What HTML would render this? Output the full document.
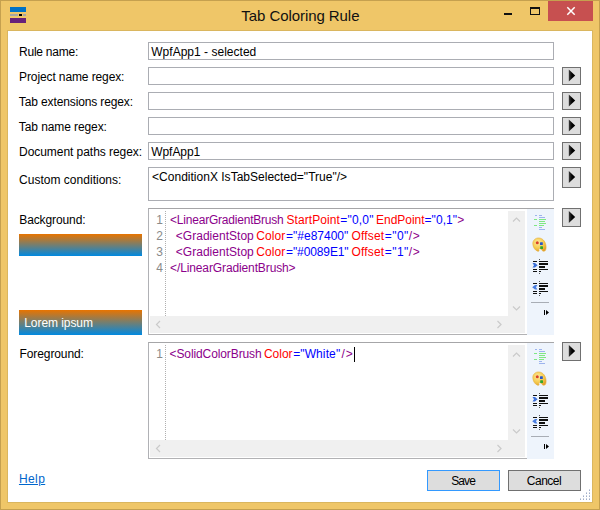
<!DOCTYPE html>
<html><head><meta charset="utf-8">
<title>Tab Coloring Rule</title>
<style>
*{box-sizing:border-box;margin:0;padding:0}
html,body{width:600px;height:510px;overflow:hidden;background:#efc668;font-family:"Liberation Sans",sans-serif;font-size:12px;color:#000}
div,span{position:absolute}
span.t{position:static}
#frame{left:0;top:0;width:600px;height:510px;border:1px solid #c5a04f;background:#efc668}
#content{left:8px;top:31px;width:584px;height:471px;background:#fff;box-shadow:0 0 0 1px #dab65f}
#title{left:0;top:6px;width:600px;text-align:center;font-size:15px;line-height:20px;color:#111}
#close{left:548px;top:1px;width:45px;height:20px;background:#c75050}
.lbl{left:19px;font-size:12px;line-height:16px;white-space:nowrap}
.inp{left:148px;width:406px;height:18px;border:1px solid #abadb3;background:#fff;font-size:12px;line-height:16px;padding-left:2px;padding-top:1px;white-space:nowrap;overflow:hidden}
.btn{left:562px;width:19px;height:18px;border:1px solid #707070;background:#dddddd}
.grad{left:19px;width:123px;background:linear-gradient(#e87400,#0089e1)}
.ed{left:148px;width:406px}
.edbox{left:0;top:0;width:406px;border-top:1px solid #a6a6a8;border-left:1px solid #b0b1b5}
.edbox:after{content:"";position:absolute;left:0;bottom:0;width:379px;height:1px;background:#b2b2b4}
.ed .vs{left:360px;top:3px;width:17px;background:#f0f0f0}
.ed .hs{left:2px;height:17px;width:375px;background:#f0f0f0}
.ed .tb{left:379px;top:1px;width:27px;background:#eef4fc}
.ed .gut{left:17px;top:3px;width:0;border-left:1px dotted #b0b0b0}
.ln{left:1px;width:14px;text-align:right;color:#8a8a8a;line-height:16px}
.code{left:22px;line-height:16px;white-space:pre;letter-spacing:-0.1px}
.p{color:#8b008b}.r{color:#ff0000}.b{color:#0000ff}
.pb{left:0;top:0;width:73px;height:21px;border:1px solid #707070;background:#dddddd;text-align:center;line-height:19px;padding-top:1px}
</style></head><body>
<div id="frame"></div>
<div style="left:241.35px;top:6px;font-size:15px;line-height:16px;white-space:pre;letter-spacing:-0.069px;line-height:20px;color:#111">Tab Coloring Rule</div>
<div style="left:10px;top:7px;width:16px;height:5px;background:#0072c6"></div>
<div style="left:10px;top:14px;width:8px;height:2px;background:#a6a6a6"></div><div style="left:23px;top:14px;width:3px;height:2px;background:#a6a6a6"></div>
<div style="left:19px;top:14px;width:3px;height:2px;background:#000"></div>
<div style="left:10px;top:18px;width:16px;height:5px;background:#68217a"></div>
<div style="left:504px;top:13px;width:8px;height:2px;background:#111"></div>
<div style="left:530px;top:7px;width:10px;height:8px;border:1px solid #111;border-top-width:2px"></div>
<div id="close"><svg width="45" height="20" style="position:absolute;left:0;top:0"><path d="M19.3 6.3 L26.7 13.7 M26.7 6.3 L19.3 13.7" stroke="#fff" stroke-width="1.5" fill="none"/></svg></div>

<div id="content"></div>

<div style="left:19.05px;top:44px;font-size:12px;line-height:16px;white-space:pre;letter-spacing:-0.244px;">Rule name:</div>
<div class="inp" style="top:42px"></div><div style="left:151.25px;top:44px;font-size:12px;line-height:16px;white-space:pre;letter-spacing:0.018px;">WpfApp1 - selected</div>

<div style="left:19.05px;top:69px;font-size:12px;line-height:16px;white-space:pre;letter-spacing:-0.111px;">Project name regex:</div>
<div class="inp" style="top:67px"></div><div class="btn" style="top:67px;height:18px"><svg width="17" height="16" style="position:absolute;left:0;top:0"><defs><linearGradient id="ag67" x1="0" y1="0" x2="1" y2="0"><stop offset="0" stop-color="#3a3a3a"/><stop offset="0.5" stop-color="#000"/></linearGradient></defs><path d="M5.8 1.6 L12.2 7.6 L5.8 13.6 Z" fill="url(#ag67)"/></svg></div>

<div style="left:18.85px;top:94px;font-size:12px;line-height:16px;white-space:pre;letter-spacing:-0.125px;">Tab extensions regex:</div>
<div class="inp" style="top:92px"></div><div class="btn" style="top:92px;height:18px"><svg width="17" height="16" style="position:absolute;left:0;top:0"><defs><linearGradient id="ag92" x1="0" y1="0" x2="1" y2="0"><stop offset="0" stop-color="#3a3a3a"/><stop offset="0.5" stop-color="#000"/></linearGradient></defs><path d="M5.8 1.6 L12.2 7.6 L5.8 13.6 Z" fill="url(#ag92)"/></svg></div>

<div style="left:18.85px;top:119px;font-size:12px;line-height:16px;white-space:pre;letter-spacing:-0.093px;">Tab name regex:</div>
<div class="inp" style="top:117px"></div><div class="btn" style="top:117px;height:18px"><svg width="17" height="16" style="position:absolute;left:0;top:0"><defs><linearGradient id="ag117" x1="0" y1="0" x2="1" y2="0"><stop offset="0" stop-color="#3a3a3a"/><stop offset="0.5" stop-color="#000"/></linearGradient></defs><path d="M5.8 1.6 L12.2 7.6 L5.8 13.6 Z" fill="url(#ag117)"/></svg></div>

<div style="left:19.05px;top:144px;font-size:12px;line-height:16px;white-space:pre;letter-spacing:-0.050px;">Document paths regex:</div>
<div class="inp" style="top:142px"></div><div style="left:151.25px;top:144px;font-size:12px;line-height:16px;white-space:pre;letter-spacing:-0.067px;">WpfApp1</div><div class="btn" style="top:142px;height:18px"><svg width="17" height="16" style="position:absolute;left:0;top:0"><defs><linearGradient id="ag142" x1="0" y1="0" x2="1" y2="0"><stop offset="0" stop-color="#3a3a3a"/><stop offset="0.5" stop-color="#000"/></linearGradient></defs><path d="M5.8 1.6 L12.2 7.6 L5.8 13.6 Z" fill="url(#ag142)"/></svg></div>

<div style="left:19.05px;top:172px;font-size:12px;line-height:16px;white-space:pre;letter-spacing:0.018px;">Custom conditions:</div>
<div class="inp" style="top:167px;height:34px"></div><div style="left:152.05px;top:169px;font-size:12px;line-height:16px;white-space:pre;letter-spacing:0.015px;">&lt;ConditionX IsTabSelected=&quot;True&quot;/&gt;</div><div class="btn" style="top:167px;height:21px"><svg width="17" height="19" style="position:absolute;left:0;top:0"><defs><linearGradient id="ag167" x1="0" y1="0" x2="1" y2="0"><stop offset="0" stop-color="#3a3a3a"/><stop offset="0.5" stop-color="#000"/></linearGradient></defs><path d="M5.8 3.1 L12.2 9.1 L5.8 15.1 Z" fill="url(#ag167)"/></svg></div>

<div style="left:19.25px;top:212px;font-size:12px;line-height:16px;white-space:pre;letter-spacing:-0.110px;">Background:</div>
<div class="grad" style="top:234px;height:22px"></div>
<div class="grad" style="top:310px;height:25px"><div style="left:5.25px;top:5px;font-size:12px;line-height:16px;white-space:pre;letter-spacing:-0.070px;color:#fff">Lorem ipsum</div></div>
<div class="ed" style="top:208px;height:127px">
<div class="edbox" style="height:127px"></div>
<div class="gut" style="height:105px"></div>
<div class="ln" style="top:4px">1</div>
<div class="ln" style="top:20px">2</div>
<div class="ln" style="top:36px">3</div>
<div class="ln" style="top:52px">4</div>
<div class="p" style="left:22.05px;top:4px;font-size:12px;line-height:16px;white-space:pre;letter-spacing:-0.211px;">&lt;LinearGradientBrush</div><div class="r" style="left:138.55px;top:4px;font-size:12px;line-height:16px;white-space:pre;letter-spacing:0.056px;">StartPoint</div><div class="b" style="left:192.30px;top:4px;font-size:12px;line-height:16px;white-space:pre;letter-spacing:0.200px;">=&quot;0,0&quot;</div><div class="r" style="left:228.05px;top:4px;font-size:12px;line-height:16px;white-space:pre;letter-spacing:-0.036px;">EndPoint</div><div class="b" style="left:276.55px;top:4px;font-size:12px;line-height:16px;white-space:pre;letter-spacing:0.050px;">=&quot;0,1&quot;</div><div class="p" style="left:309.30px;top:4px;font-size:12px;line-height:16px;white-space:pre;letter-spacing:-0.750px;">&gt;</div><div class="p" style="left:27.80px;top:20px;font-size:12px;line-height:16px;white-space:pre;letter-spacing:0.021px;">&lt;GradientStop</div><div class="r" style="left:108.30px;top:20px;font-size:12px;line-height:16px;white-space:pre;letter-spacing:0.062px;">Color</div><div class="b" style="left:138.05px;top:20px;font-size:12px;line-height:16px;white-space:pre;letter-spacing:0.000px;">=&quot;#e87400&quot;</div><div class="r" style="left:203.55px;top:20px;font-size:12px;line-height:16px;white-space:pre;letter-spacing:0.150px;">Offset</div><div class="b" style="left:236.80px;top:20px;font-size:12px;line-height:16px;white-space:pre;letter-spacing:0.417px;">=&quot;0&quot;</div><div class="p" style="left:260.80px;top:20px;font-size:12px;line-height:16px;white-space:pre;letter-spacing:0.500px;">/&gt;</div><div class="p" style="left:27.80px;top:36px;font-size:12px;line-height:16px;white-space:pre;letter-spacing:0.021px;">&lt;GradientStop</div><div class="r" style="left:108.30px;top:36px;font-size:12px;line-height:16px;white-space:pre;letter-spacing:0.062px;">Color</div><div class="b" style="left:138.05px;top:36px;font-size:12px;line-height:16px;white-space:pre;letter-spacing:-0.111px;">=&quot;#0089E1&quot;</div><div class="r" style="left:203.55px;top:36px;font-size:12px;line-height:16px;white-space:pre;letter-spacing:0.150px;">Offset</div><div class="b" style="left:236.80px;top:36px;font-size:12px;line-height:16px;white-space:pre;letter-spacing:0.417px;">=&quot;1&quot;</div><div class="p" style="left:260.80px;top:36px;font-size:12px;line-height:16px;white-space:pre;letter-spacing:0.500px;">/&gt;</div><div class="p" style="left:22.05px;top:52px;font-size:12px;line-height:16px;white-space:pre;letter-spacing:-0.119px;">&lt;/LinearGradientBrush&gt;</div>
<div class="vs" style="height:105px"><svg width="17" height="105" style="position:absolute;left:0;top:0"><path d="M5 10.5 L8.5 7 L12 10.5" stroke="#cacaca" stroke-width="1.2" fill="none"/><path d="M5 95.5 L8.5 99 L12 95.5" stroke="#cacaca" stroke-width="1.2" fill="none"/></svg></div>
<div class="hs" style="top:108px"><svg width="375" height="17" style="position:absolute;left:0;top:0"><path d="M10 5 L6.5 8.5 L10 12" stroke="#cacaca" stroke-width="1.2" fill="none"/><path d="M347.5 5 L351 8.5 L347.5 12" stroke="#cacaca" stroke-width="1.2" fill="none"/></svg></div>
<div class="tb" style="height:126px"><svg width="27" height="126" viewBox="0 0 27 126" style="position:absolute;left:0;top:0" shape-rendering="crispEdges"><rect x="8" y="6" width="2" height="1" fill="#9db4ee"/><rect x="12" y="6" width="3" height="1" fill="#9db4ee"/><rect x="12" y="8" width="6" height="1" fill="#9db4ee"/><rect x="7" y="10" width="3" height="1" fill="#7fe884"/><rect x="12" y="10" width="7" height="1" fill="#7fe884"/><rect x="12" y="12" width="6" height="1" fill="#7fe884"/><rect x="12" y="14" width="7" height="1" fill="#7fe884"/><rect x="7" y="16" width="3" height="1" fill="#7fe884"/><rect x="12" y="16" width="5" height="1" fill="#7fe884"/><rect x="12" y="18" width="3" height="1" fill="#9db4ee"/><rect x="12" y="20" width="6" height="1" fill="#9db4ee"/><g shape-rendering="auto"><defs><radialGradient id="pg" cx="0.4" cy="0.35" r="0.7"><stop offset="0" stop-color="#fdeaa0"/><stop offset="0.6" stop-color="#f5cb50"/><stop offset="1" stop-color="#e3a02c"/></radialGradient></defs><path d="M12.2 29 C8.6 28.6 5.7 31.2 5.8 34.6 C5.9 38 7.8 41.2 10.6 42.2 C11.8 42.6 12.3 41.9 11.9 40.9 C11.5 39.8 12.5 39.2 13.5 39.8 C14.5 40.4 15.3 42.2 16.7 42.3 C18.5 42.4 19.2 40.4 19.1 37.8 C18.9 33.2 16.2 29.4 12.2 29 Z" fill="url(#pg)" stroke="#e6b040" stroke-width="0.6"/><circle cx="10.3" cy="33.8" r="1.5" fill="#d8402a"/><rect x="13" y="33.2" width="2.8" height="2.8" rx="0.5" fill="#2856c8"/><rect x="13.2" y="37.2" width="2.8" height="2.8" rx="0.5" fill="#2ea82e"/></g><rect x="12" y="50" width="1" height="1" fill="#555"/><rect x="6" y="52" width="4" height="1" fill="#101010"/><rect x="12" y="52" width="9" height="1" fill="#101010"/><rect x="12" y="54" width="9" height="2" fill="#101010"/><rect x="12" y="57" width="6" height="1.5" fill="#101010"/><rect x="6" y="60" width="4" height="1" fill="#101010"/><rect x="12" y="60" width="9" height="1" fill="#101010"/><rect x="6" y="62" width="4" height="1" fill="#101010"/><rect x="12" y="62" width="2" height="1" fill="#101010"/><rect x="12" y="64" width="1" height="1" fill="#555"/><g shape-rendering="auto"><path d="M5.5 54 L8 54 L10.600000000000023 56.30000000000001 L8 58.60000000000002 L5.5 58.60000000000002 L7 56.30000000000001 Z" fill="#3b6fd8"/></g><rect x="12" y="72" width="1" height="1" fill="#555"/><rect x="6" y="74" width="4" height="1" fill="#101010"/><rect x="12" y="74" width="9" height="1" fill="#101010"/><rect x="12" y="76" width="9" height="2" fill="#101010"/><rect x="12" y="79" width="6" height="1.5" fill="#101010"/><rect x="6" y="82" width="4" height="1" fill="#101010"/><rect x="12" y="82" width="9" height="1" fill="#101010"/><rect x="6" y="84" width="4" height="1" fill="#101010"/><rect x="12" y="84" width="2" height="1" fill="#101010"/><rect x="12" y="86" width="1" height="1" fill="#555"/><g shape-rendering="auto"><path d="M10.399999999999977 76 L8 76 L5.2000000000000455 78.30000000000001 L8 80.60000000000002 L10.399999999999977 80.60000000000002 L9 78.30000000000001 Z" fill="#4a7ee0"/></g><rect x="4" y="93" width="18" height="1" fill="#a8adb5"/><rect x="17" y="101" width="1" height="5" fill="#000"/><path d="M19 101 L19 106 L22 103.5 Z" fill="#000" shape-rendering="auto"/></svg></div>
</div>
<div class="btn" style="top:208px;height:19px"><svg width="17" height="17" style="position:absolute;left:0;top:0"><defs><linearGradient id="ag208" x1="0" y1="0" x2="1" y2="0"><stop offset="0" stop-color="#3a3a3a"/><stop offset="0.5" stop-color="#000"/></linearGradient></defs><path d="M5.8 2.1 L12.2 8.1 L5.8 14.1 Z" fill="url(#ag208)"/></svg></div>

<div style="left:19.55px;top:346px;font-size:12px;line-height:16px;white-space:pre;letter-spacing:-0.100px;">Foreground:</div>
<div class="ed" style="top:342px;height:117px">
<div class="edbox" style="height:117px"></div>
<div class="gut" style="height:95px"></div>
<div class="ln" style="top:4px">1</div>
<div class="p" style="left:21.55px;top:4px;font-size:12px;line-height:16px;white-space:pre;letter-spacing:-0.107px;">&lt;SolidColorBrush</div><div class="r" style="left:115.95px;top:4px;font-size:12px;line-height:16px;white-space:pre;letter-spacing:0.000px;">Color</div><div class="b" style="left:145.15px;top:4px;font-size:12px;line-height:16px;white-space:pre;letter-spacing:0.114px;">=&quot;White&quot;</div><div class="p" style="left:193.55px;top:4px;font-size:12px;line-height:16px;white-space:pre;letter-spacing:0.800px;">/&gt;</div>
<div style="left:206px;top:5px;width:1px;height:15px;background:#000"></div>
<div class="vs" style="height:95px"><svg width="17" height="95" style="position:absolute;left:0;top:0"><path d="M5 11.5 L8.5 8 L12 11.5" stroke="#cacaca" stroke-width="1.2" fill="none"/><path d="M5 84.5 L8.5 88 L12 84.5" stroke="#cacaca" stroke-width="1.2" fill="none"/></svg></div>
<div class="hs" style="top:98px"><svg width="375" height="17" style="position:absolute;left:0;top:0"><path d="M10 5 L6.5 8.5 L10 12" stroke="#cacaca" stroke-width="1.2" fill="none"/><path d="M347.5 5 L351 8.5 L347.5 12" stroke="#cacaca" stroke-width="1.2" fill="none"/></svg></div>
<div class="tb" style="height:116px"><svg width="27" height="126" viewBox="0 0 27 126" style="position:absolute;left:0;top:0" shape-rendering="crispEdges"><rect x="8" y="6" width="2" height="1" fill="#9db4ee"/><rect x="12" y="6" width="3" height="1" fill="#9db4ee"/><rect x="12" y="8" width="6" height="1" fill="#9db4ee"/><rect x="7" y="10" width="3" height="1" fill="#7fe884"/><rect x="12" y="10" width="7" height="1" fill="#7fe884"/><rect x="12" y="12" width="6" height="1" fill="#7fe884"/><rect x="12" y="14" width="7" height="1" fill="#7fe884"/><rect x="7" y="16" width="3" height="1" fill="#7fe884"/><rect x="12" y="16" width="5" height="1" fill="#7fe884"/><rect x="12" y="18" width="3" height="1" fill="#9db4ee"/><rect x="12" y="20" width="6" height="1" fill="#9db4ee"/><g shape-rendering="auto"><defs><radialGradient id="pg" cx="0.4" cy="0.35" r="0.7"><stop offset="0" stop-color="#fdeaa0"/><stop offset="0.6" stop-color="#f5cb50"/><stop offset="1" stop-color="#e3a02c"/></radialGradient></defs><path d="M12.2 29 C8.6 28.6 5.7 31.2 5.8 34.6 C5.9 38 7.8 41.2 10.6 42.2 C11.8 42.6 12.3 41.9 11.9 40.9 C11.5 39.8 12.5 39.2 13.5 39.8 C14.5 40.4 15.3 42.2 16.7 42.3 C18.5 42.4 19.2 40.4 19.1 37.8 C18.9 33.2 16.2 29.4 12.2 29 Z" fill="url(#pg)" stroke="#e6b040" stroke-width="0.6"/><circle cx="10.3" cy="33.8" r="1.5" fill="#d8402a"/><rect x="13" y="33.2" width="2.8" height="2.8" rx="0.5" fill="#2856c8"/><rect x="13.2" y="37.2" width="2.8" height="2.8" rx="0.5" fill="#2ea82e"/></g><rect x="12" y="50" width="1" height="1" fill="#555"/><rect x="6" y="52" width="4" height="1" fill="#101010"/><rect x="12" y="52" width="9" height="1" fill="#101010"/><rect x="12" y="54" width="9" height="2" fill="#101010"/><rect x="12" y="57" width="6" height="1.5" fill="#101010"/><rect x="6" y="60" width="4" height="1" fill="#101010"/><rect x="12" y="60" width="9" height="1" fill="#101010"/><rect x="6" y="62" width="4" height="1" fill="#101010"/><rect x="12" y="62" width="2" height="1" fill="#101010"/><rect x="12" y="64" width="1" height="1" fill="#555"/><g shape-rendering="auto"><path d="M5.5 54 L8 54 L10.600000000000023 56.30000000000001 L8 58.60000000000002 L5.5 58.60000000000002 L7 56.30000000000001 Z" fill="#3b6fd8"/></g><rect x="12" y="72" width="1" height="1" fill="#555"/><rect x="6" y="74" width="4" height="1" fill="#101010"/><rect x="12" y="74" width="9" height="1" fill="#101010"/><rect x="12" y="76" width="9" height="2" fill="#101010"/><rect x="12" y="79" width="6" height="1.5" fill="#101010"/><rect x="6" y="82" width="4" height="1" fill="#101010"/><rect x="12" y="82" width="9" height="1" fill="#101010"/><rect x="6" y="84" width="4" height="1" fill="#101010"/><rect x="12" y="84" width="2" height="1" fill="#101010"/><rect x="12" y="86" width="1" height="1" fill="#555"/><g shape-rendering="auto"><path d="M10.399999999999977 76 L8 76 L5.2000000000000455 78.30000000000001 L8 80.60000000000002 L10.399999999999977 80.60000000000002 L9 78.30000000000001 Z" fill="#4a7ee0"/></g><rect x="4" y="93" width="18" height="1" fill="#a8adb5"/><rect x="17" y="101" width="1" height="5" fill="#000"/><path d="M19 101 L19 106 L22 103.5 Z" fill="#000" shape-rendering="auto"/></svg></div>
</div>
<div class="btn" style="top:342px;height:19px"><svg width="17" height="17" style="position:absolute;left:0;top:0"><defs><linearGradient id="ag342" x1="0" y1="0" x2="1" y2="0"><stop offset="0" stop-color="#3a3a3a"/><stop offset="0.5" stop-color="#000"/></linearGradient></defs><path d="M5.8 2.1 L12.2 8.1 L5.8 14.1 Z" fill="url(#ag342)"/></svg></div>

<div style="left:18.95px;top:471px;font-size:12px;line-height:16px;white-space:pre;letter-spacing:0.400px;color:#0066cc;text-decoration:underline">Help</div>
<div class="pb" style="left:427px;top:470px;border-color:#3399ff"></div><div style="left:451.15px;top:473px;font-size:12px;line-height:16px;white-space:pre;letter-spacing:-0.867px;">Save</div>
<div class="pb" style="left:508px;top:470px"></div><div style="left:526.85px;top:473px;font-size:12px;line-height:16px;white-space:pre;letter-spacing:-0.500px;">Cancel</div>
<svg width="12" height="12" style="position:absolute;left:580px;top:489px" shape-rendering="crispEdges"><rect x="9" y="0" width="1" height="1" fill="#c9d2e2"/><rect x="9" y="1" width="1" height="1" fill="#a2aec6"/><rect x="6" y="3" width="1" height="1" fill="#c9d2e2"/><rect x="6" y="4" width="1" height="1" fill="#a2aec6"/><rect x="9" y="3" width="1" height="1" fill="#c9d2e2"/><rect x="9" y="4" width="1" height="1" fill="#a2aec6"/><rect x="3" y="6" width="1" height="1" fill="#c9d2e2"/><rect x="3" y="7" width="1" height="1" fill="#a2aec6"/><rect x="6" y="6" width="1" height="1" fill="#c9d2e2"/><rect x="6" y="7" width="1" height="1" fill="#a2aec6"/><rect x="9" y="6" width="1" height="1" fill="#c9d2e2"/><rect x="9" y="7" width="1" height="1" fill="#a2aec6"/><rect x="0" y="9" width="1" height="1" fill="#c9d2e2"/><rect x="0" y="10" width="1" height="1" fill="#a2aec6"/><rect x="3" y="9" width="1" height="1" fill="#c9d2e2"/><rect x="3" y="10" width="1" height="1" fill="#a2aec6"/><rect x="6" y="9" width="1" height="1" fill="#c9d2e2"/><rect x="6" y="10" width="1" height="1" fill="#a2aec6"/><rect x="9" y="9" width="1" height="1" fill="#c9d2e2"/><rect x="9" y="10" width="1" height="1" fill="#a2aec6"/></svg>
</body></html>
